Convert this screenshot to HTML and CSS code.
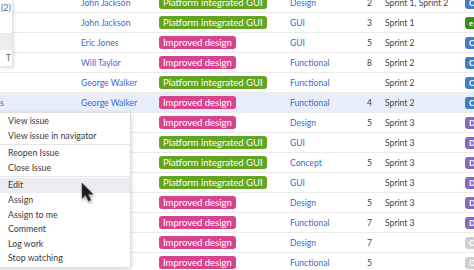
FILE: index.html
```html
<!DOCTYPE html>
<html lang="en">
<head>
    <meta charset="UTF-8">
    <title>Issues</title>
    <link rel="stylesheet" href="styles.css">
</head>
<body>
    <div class="issues">
        <div class="row"><span></span><a class="name">John Jackson</a><span><em class="badge green">Platform integrated GUI</em></span><a class="comp">Design</a><span class="num">2</span><span class="sprint">Sprint 1, Sprint 2</span><span><em class="status blue">CLOSED</em></span></div>
        <div class="row"><span></span><a class="name">John Jackson</a><span><em class="badge green">Platform integrated GUI</em></span><a class="comp">GUI</a><span class="num">3</span><span class="sprint">Sprint 1</span><span><em class="status dark">e</em></span></div>
        <div class="row"><span></span><a class="name">Eric Jones</a><span><em class="badge pink">Improved design</em></span><a class="comp">GUI</a><span class="num">5</span><span class="sprint">Sprint 2</span><span><em class="status blue">CLOSED</em></span></div>
        <div class="row"><span></span><a class="name">Will Taylor</a><span><em class="badge pink">Improved design</em></span><a class="comp">Functional</a><span class="num">8</span><span class="sprint">Sprint 2</span><span><em class="status blue">CLOSED</em></span></div>
        <div class="row"><span></span><a class="name">George Walker</a><span><em class="badge green">Platform integrated GUI</em></span><a class="comp">Functional</a><span class="num"></span><span class="sprint">Sprint 2</span><span><em class="status blue">CLOSED</em></span></div>
        <div class="row selected"><span class="summary">s</span><a class="name">George Walker</a><span><em class="badge pink">Improved design</em></span><a class="comp">Functional</a><span class="num">4</span><span class="sprint">Sprint 2</span><span><em class="status blue">CLOSED</em></span></div>
        <div class="row"><span></span><a class="name"></a><span><em class="badge pink">Improved design</em></span><a class="comp">Design</a><span class="num">5</span><span class="sprint">Sprint 3</span><span><em class="status purple">DONE</em></span></div>
        <div class="row"><span></span><a class="name"></a><span><em class="badge green">Platform integrated GUI</em></span><a class="comp">GUI</a><span class="num"></span><span class="sprint">Sprint 3</span><span><em class="status purple">DONE</em></span></div>
        <div class="row"><span></span><a class="name"></a><span><em class="badge green">Platform integrated GUI</em></span><a class="comp">Concept</a><span class="num">5</span><span class="sprint">Sprint 3</span><span><em class="status purple">DONE</em></span></div>
        <div class="row"><span></span><a class="name"></a><span><em class="badge green">Platform integrated GUI</em></span><a class="comp">GUI</a><span class="num"></span><span class="sprint">Sprint 3</span><span><em class="status purple">DONE</em></span></div>
        <div class="row"><span></span><a class="name"></a><span><em class="badge pink">Improved design</em></span><a class="comp">Design</a><span class="num">5</span><span class="sprint">Sprint 3</span><span><em class="status purple">DONE</em></span></div>
        <div class="row"><span></span><a class="name"></a><span><em class="badge pink">Improved design</em></span><a class="comp">Functional</a><span class="num">7</span><span class="sprint">Sprint 3</span><span><em class="status purple">DONE</em></span></div>
        <div class="row"><span></span><a class="name"></a><span><em class="badge pink">Improved design</em></span><a class="comp">Design</a><span class="num">7</span><span class="sprint"></span><span><em class="status gray">OPEN</em></span></div>
        <div class="row"><span></span><a class="name"></a><span><em class="badge pink">Improved design</em></span><a class="comp">Functional</a><span class="num">5</span><span class="sprint"></span><span><em class="status gray">OPEN</em></span></div>
    </div>

    <!-- leftover of a column picker at the top left -->
    <div class="picker">
        <div class="picker-item">(2)</div>
        <div class="picker-item"></div>
        <div class="picker-item active"></div>
        <div class="picker-item">T</div>
    </div>

    <ul class="menu">
        <li class="group">
            <a>View issue</a>
            <a>View issue in navigator</a>
        </li>
        <li class="group">
            <a>Reopen Issue</a>
            <a>Close Issue</a>
        </li>
        <li class="group">
            <a class="hover">Edit</a>
            <a>Assign</a>
            <a>Assign to me</a>
            <a>Comment</a>
            <a>Log work</a>
            <a>Stop watching</a>
        </li>
    </ul>

    <svg class="cursor" width="14" height="21" viewBox="0 0 14 21">
        <path d="M1 1 L1 16.5 L4.6 13 L7.4 19.2 L9.8 18.1 L7.1 12.2 L12 12.2 Z" fill="#1d1d1d" stroke="#555" stroke-width="0.6"/>
    </svg>
</body>
</html>
```

FILE: styles.css
```css
body {
    margin: 0;
    background-color: #fff;
    font-family: Lato, "Open Sans", sans-serif;
    font-size: 8.6px;
    color: #444;
    overflow: hidden;
    height: 270px;
    position: relative;
}

.issues {
    margin-top: -7px;
}

.row {
    display: grid;
    grid-template-columns: 81px 78px 131px 70px 12px 93px 1fr;
    align-items: center;
    height: 20px;
    box-sizing: border-box;
    border-bottom: 1px solid #ebebeb;
    white-space: nowrap;
}

.row.selected {
    background-color: #e7eefa;
}

.name, .comp, .summary {
    color: #3b6cc6;
}

.num {
    text-align: right;
}

.sprint {
    padding-left: 13px;
}

.badge {
    display: inline-block;
    font-style: normal;
    color: #fff;
    height: 13px;
    line-height: 13px;
    padding: 0 4px;
    border-radius: 3px;
    font-size: 9.5px;
}

.green {
    background-color: #62a523;
}

.pink {
    background-color: #d5448d;
}

.status {
    display: inline-block;
    font-style: normal;
    font-size: 8px;
    font-weight: bold;
    color: #fff;
    height: 12px;
    line-height: 12px;
    padding: 0 4px;
    border-radius: 3px;
}

.status.blue {
    background-color: #3f7fc4;
}

.status.dark {
    background-color: #3b8a22;
}

.status.purple {
    background-color: #8368c4;
}

.status.gray {
    background-color: #cfcfcf;
}

.picker {
    position: absolute;
    top: 0;
    left: 0;
    width: 12px;
    height: 66px;
    overflow: hidden;
    background-color: #fff;
    border-right: 1px solid #e2e2e2;
    border-bottom: 1px solid #e2e2e2;
    box-shadow: 1px 1px 3px rgba(0, 0, 0, 0.12);
    font-size: 9px;
    color: #666;
}

.picker-item {
    height: 16.5px;
    line-height: 16.5px;
    white-space: nowrap;
    display: flex;
    justify-content: flex-end;
    padding-right: 1px;
}

.picker-item.active {
    background-color: #ececec;
}

.menu {
    position: absolute;
    top: 112px;
    left: -10px;
    width: 139px;
    margin: 0;
    padding: 0;
    list-style: none;
    background-color: #fff;
    border: 1px solid #ddd;
    border-bottom: none;
    box-shadow: 0 2px 5px rgba(0, 0, 0, 0.18);
    font-size: 8.8px;
    color: #3a3a3a;
}

.group {
    padding: 1px 0;
}

.group + .group {
    border-top: 1px solid #e4e4e4;
}

.menu a {
    display: block;
    height: 14.6px;
    line-height: 14.6px;
    padding-left: 17px;
}

.menu a.hover {
    background-color: #ebecf0;
}

.cursor {
    position: absolute;
    top: 182px;
    left: 81px;
    filter: drop-shadow(1px 2px 1.5px rgba(0, 0, 0, 0.35));
}
```
